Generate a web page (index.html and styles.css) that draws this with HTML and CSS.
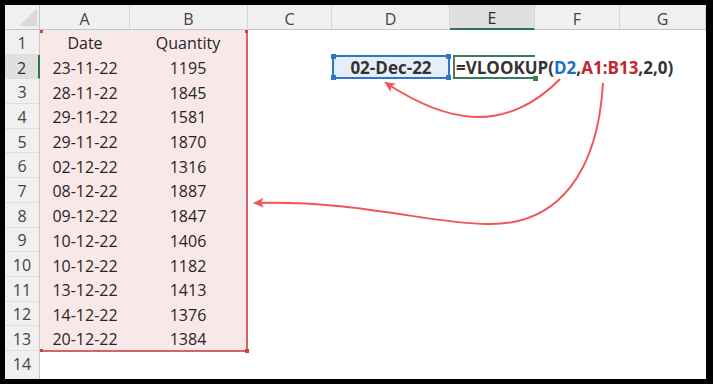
FILE: index.html
```html
<!DOCTYPE html>
<html lang="en">
<head>
<meta charset="utf-8">
<title>VLOOKUP example</title>
<link rel="stylesheet" href="styles.css">
</head>
<body>
<div class="sheet">
  <div class="corner"></div>
  <div class="hd">A</div><div class="hd">B</div><div class="hd">C</div><div class="hd">D</div><div class="hd on">E</div><div class="hd">F</div><div class="hd">G</div>

  <div class="rh">1</div><div class="c r tl">Date</div><div class="c r rr tr">Quantity</div><div class="c"></div><div class="c"></div><div class="c"></div><div class="c"></div><div class="c"></div>
  <div class="rh on">2</div><div class="c r">23-11-22</div><div class="c r rr">1195</div><div class="c"></div>
  <div class="c sel">02-Dec-22<i class="h h1"></i><i class="h h2"></i><i class="h h3"></i><i class="h h4"></i></div>
  <div class="c edit"><span class="caret"></span>=VLOOKUP(<span class="ref-b">D2</span>,<span class="ref-r">A1:B13</span>,2,0)<i class="gh"></i></div>
  <div class="c"></div><div class="c"></div>
  <div class="rh">3</div><div class="c r">28-11-22</div><div class="c r rr">1845</div><div class="c"></div><div class="c"></div><div class="c"></div><div class="c"></div><div class="c"></div>
  <div class="rh">4</div><div class="c r">29-11-22</div><div class="c r rr">1581</div><div class="c"></div><div class="c"></div><div class="c"></div><div class="c"></div><div class="c"></div>
  <div class="rh">5</div><div class="c r">29-11-22</div><div class="c r rr">1870</div><div class="c"></div><div class="c"></div><div class="c"></div><div class="c"></div><div class="c"></div>
  <div class="rh">6</div><div class="c r">02-12-22</div><div class="c r rr">1316</div><div class="c"></div><div class="c"></div><div class="c"></div><div class="c"></div><div class="c"></div>
  <div class="rh">7</div><div class="c r">08-12-22</div><div class="c r rr">1887</div><div class="c"></div><div class="c"></div><div class="c"></div><div class="c"></div><div class="c"></div>
  <div class="rh">8</div><div class="c r">09-12-22</div><div class="c r rr">1847</div><div class="c"></div><div class="c"></div><div class="c"></div><div class="c"></div><div class="c"></div>
  <div class="rh">9</div><div class="c r">10-12-22</div><div class="c r rr">1406</div><div class="c"></div><div class="c"></div><div class="c"></div><div class="c"></div><div class="c"></div>
  <div class="rh">10</div><div class="c r">10-12-22</div><div class="c r rr">1182</div><div class="c"></div><div class="c"></div><div class="c"></div><div class="c"></div><div class="c"></div>
  <div class="rh">11</div><div class="c r">13-12-22</div><div class="c r rr">1413</div><div class="c"></div><div class="c"></div><div class="c"></div><div class="c"></div><div class="c"></div>
  <div class="rh">12</div><div class="c r">14-12-22</div><div class="c r rr">1376</div><div class="c"></div><div class="c"></div><div class="c"></div><div class="c"></div><div class="c"></div>
  <div class="rh">13</div><div class="c r rb bl">20-12-22</div><div class="c r rr rb br">1384</div><div class="c"></div><div class="c"></div><div class="c"></div><div class="c"></div><div class="c"></div>
  <div class="rh last">14</div><div class="c"></div><div class="c"></div><div class="c"></div><div class="c"></div><div class="c"></div><div class="c"></div><div class="c"></div>
</div>

<svg class="arrows" width="713" height="384" viewBox="0 0 713 384" aria-hidden="true">
  <defs>
    <marker id="ah" viewBox="0 0 10 10" refX="8" refY="5" markerWidth="11" markerHeight="11" markerUnits="userSpaceOnUse" orient="auto">
      <path d="M0,0.5 L10,5 L0,9.5 L2.5,5 Z" fill="#f05656"/>
    </marker>
  </defs>
  <path d="M560,79 C535,105 505,118 475,117 C445,116 415,102 386,83" fill="none" stroke="#f05656" stroke-width="2" marker-end="url(#ah)"/>
  <path d="M603,83 C598,170 560,226 487,224 C430,224 360,200 255,203" fill="none" stroke="#f05656" stroke-width="2" marker-end="url(#ah)"/>
</svg>
</body>
</html>
```

FILE: styles.css
```css
html, body {
  margin: 0;
  padding: 0;
}

body {
  position: relative;
  width: 713px;
  height: 384px;
  overflow: hidden;
  background: #000;
  font-family: "Open Sans", "Noto Sans", "DejaVu Sans", sans-serif;
  color: #262626;
}

.sheet {
  display: grid;
  grid-template-columns: 35px 90px 118px 84px 118px 85px 85px 86px;
  grid-template-rows: 25px repeat(13, 24.7px) 1fr;
  width: 701px;
  height: 374px;
  margin: 5px 0 0 5px;
  background: #fff;
  overflow: hidden;
}

.corner {
  background-color: #f0f0f0;
  background-image: linear-gradient(to bottom right, transparent 50%, #d9d9d9 50%);
  background-size: 18px 18px;
  background-position: right 2px bottom 3px;
  background-repeat: no-repeat;
  border-right: 1px solid #c6c6c6;
  border-bottom: 1px solid #c6c6c6;
  box-sizing: border-box;
}

.hd {
  display: flex;
  align-items: center;
  justify-content: center;
  padding-top: 3px;
  box-sizing: border-box;
  background: #f0f0f0;
  border-right: 1px solid #d6d6d6;
  border-bottom: 1px solid #c6c6c6;
  color: #444;
  font-size: 16px;
}

.hd.on {
  background: #e0e0e0;
  border-bottom: 2px solid #2f7650;
  color: #2d2d2d;
}

.rh {
  display: flex;
  align-items: center;
  justify-content: center;
  padding-top: 2px;
  box-sizing: border-box;
  background: #f0f0f0;
  border-right: 1px solid #c6c6c6;
  border-bottom: 1px solid #dedede;
  color: #444;
  font-size: 16px;
}

.rh.on {
  background: #e0e0e0;
  border-right: 2px solid #2f7650;
  color: #2d2d2d;
}

.rh.last {
  align-items: flex-start;
  padding-top: 2px;
  border-bottom: none;
}

.c {
  position: relative;
  display: flex;
  align-items: center;
  justify-content: center;
  padding-top: 2px;
  box-sizing: border-box;
  font-size: 16px;
  white-space: nowrap;
}

.r {
  background: #f9e8e8;
}

.rr {
  border-right: 2px solid #d6636a;
}

.rb {
  border-bottom: 2px solid #d6636a;
  margin-bottom: -1px;
}

.tl::before,
.tr::before,
.bl::before,
.br::before {
  content: "";
  position: absolute;
  width: 3px;
  height: 3px;
  background: #d63b44;
}

.tl::before { left: 0; top: 0; }
.tr::before { right: -2px; top: 0; }
.bl::before { left: 0; bottom: -2px; }
.br::before { right: -3px; bottom: -3px; width: 4px; height: 4px; }

.sel {
  background: #e6eff9;
  border: 2px solid #2b78c8;
  font-weight: 700;
  font-size: 17px;
  color: #333;
  padding-top: 1px;
}

.h {
  position: absolute;
  width: 5px;
  height: 5px;
  background: #2b78c8;
}

.h1 { left: -3px; top: -3px; }
.h2 { right: -3px; top: -3px; }
.h3 { left: -3px; bottom: -3px; }
.h4 { right: -3px; bottom: -3px; }

.edit {
  justify-content: flex-start;
  margin-left: 3px;
  padding-left: 3px;
  border-top: 2px solid #3b7a58;
  border-bottom: 2px solid #3b7a58;
  font-weight: 700;
  font-size: 17px;
  color: #333;
  overflow: visible;
  padding-top: 1px;
}

.caret {
  position: absolute;
  left: 0;
  top: 0;
  width: 2px;
  height: 100%;
  background: #6d6d6d;
}

.gh {
  position: absolute;
  right: -3px;
  bottom: -4px;
  width: 5px;
  height: 5px;
  background: #3b7a58;
}

.ref-b {
  color: #1b6ec2;
}

.ref-r {
  color: #c3272e;
}

.arrows {
  position: absolute;
  left: 0;
  top: 0;
  pointer-events: none;
}
```
